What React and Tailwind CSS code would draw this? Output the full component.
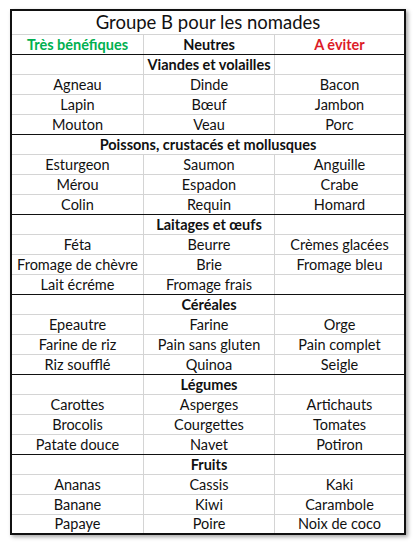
const sections = [
  {
    title: 'Viandes et volailles',
    rows: [
      ['Agneau', 'Dinde', 'Bacon'],
      ['Lapin', 'Bœuf', 'Jambon'],
      ['Mouton', 'Veau', 'Porc'],
    ],
  },
  {
    title: 'Poissons, crustacés et mollusques',
    wide: true,
    rows: [
      ['Esturgeon', 'Saumon', 'Anguille'],
      ['Mérou', 'Espadon', 'Crabe'],
      ['Colin', 'Requin', 'Homard'],
    ],
  },
  {
    title: 'Laitages et œufs',
    rows: [
      ['Féta', 'Beurre', 'Crèmes glacées'],
      ['Fromage de chèvre', 'Brie', 'Fromage bleu'],
      ['Lait écréme', 'Fromage frais', ''],
    ],
  },
  {
    title: 'Céréales',
    rows: [
      ['Epeautre', 'Farine', 'Orge'],
      ['Farine de riz', 'Pain sans gluten', 'Pain complet'],
      ['Riz soufflé', 'Quinoa', 'Seigle'],
    ],
  },
  {
    title: 'Légumes',
    rows: [
      ['Carottes', 'Asperges', 'Artichauts'],
      ['Brocolis', 'Courgettes', 'Tomates'],
      ['Patate douce', 'Navet', 'Potiron'],
    ],
  },
  {
    title: 'Fruits',
    rows: [
      ['Ananas', 'Cassis', 'Kaki'],
      ['Banane', 'Kiwi', 'Carambole'],
      ['Papaye', 'Poire', 'Noix de coco'],
    ],
  },
];

const cell = 'flex items-center justify-center leading-none pt-[1px]';
const grid = 'grid grid-cols-[132px_131px_1fr]';

export default function App() {
  return (
    <div className="w-[413px] h-[542px] bg-white pt-[9px] pl-[10px] font-['Lato','Open_Sans',sans-serif] text-[14.5px] text-[#111]">
      <div className="w-[396px] border-2 border-[#111] shadow-[2px_2px_4px_rgba(0,0,0,0.35)] bg-white">
        <div className="h-[24px] border-b border-[#d4d4d4] flex items-center justify-center text-[18.5px] pt-[1px]">
          Groupe B pour les nomades
        </div>
        <div className={`${grid} h-[20px] border-b-[1.5px] border-[#111] font-bold`}>
          <div className={`${cell} border-r border-[#d4d4d4] text-[#00b050]`}>Très bénéfiques</div>
          <div className={`${cell} border-r border-[#d4d4d4]`}>Neutres</div>
          <div className={`${cell} text-[#dc1c28]`}>A éviter</div>
        </div>
        {sections.map((s, si) => (
          <div key={s.title}>
            {s.wide ? (
              <div className={`${cell} h-[20px] border-b border-[#d4d4d4] font-bold`}>{s.title}</div>
            ) : (
              <div className={`${grid} h-[20px] border-b border-[#d4d4d4] font-bold`}>
                <div className="border-r border-[#d4d4d4]" />
                <div className={`${cell} border-r border-[#d4d4d4] whitespace-nowrap`}>{s.title}</div>
                <div />
              </div>
            )}
            {s.rows.map((r, ri) => {
              const lastInSection = ri === s.rows.length - 1;
              const lastAll = lastInSection && si === sections.length - 1;
              const rowCls = lastAll
                ? 'h-[18px]'
                : lastInSection
                ? 'h-[20px] border-b-[1.5px] border-[#111]'
                : 'h-[20px] border-b border-[#d4d4d4]';
              return (
                <div key={ri} className={`${grid} ${rowCls}`}>
                  <div className={`${cell} border-r border-[#d4d4d4] whitespace-nowrap`}>{r[0]}</div>
                  <div className={`${cell} border-r border-[#d4d4d4] whitespace-nowrap`}>{r[1]}</div>
                  <div className={`${cell} whitespace-nowrap`}>{r[2]}</div>
                </div>
              );
            })}
          </div>
        ))}
      </div>
    </div>
  );
}
